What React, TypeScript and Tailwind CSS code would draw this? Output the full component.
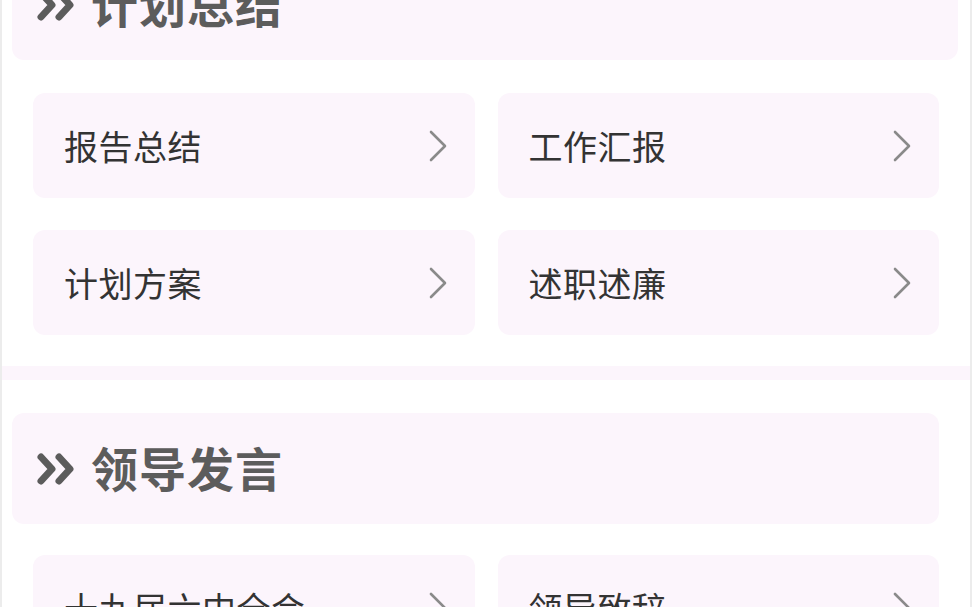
import React from "react";

const font = { fontFamily: '"Noto Sans CJK SC", "Noto Sans", sans-serif' };

function Chevron() {
  return (
    <svg width="20" height="32" viewBox="0 0 20 32" fill="none" className="shrink-0">
      <polyline points="3,2 17,16 3,30" stroke="#8a8a8a" strokeWidth="2.6" strokeLinecap="round" strokeLinejoin="round" />
    </svg>
  );
}

function DoubleChevron() {
  return (
    <svg width="40" height="34" viewBox="0 0 40 34" fill="none" className="shrink-0">
      <path d="M5 5 L16 17 L5 29" stroke="#5c5c5c" strokeWidth="7" strokeLinecap="round" strokeLinejoin="round" />
      <path d="M23 5 L34 17 L23 29" stroke="#5c5c5c" strokeWidth="7" strokeLinecap="round" strokeLinejoin="round" />
    </svg>
  );
}

function Header({ title, wide }: { title: string; wide?: boolean }) {
  return (
    <div
      className={
        "ml-[10px] h-[111px] rounded-[12px] bg-[#fcf5fc] flex items-center pl-[24px] gap-[15px] " +
        (wide ? "mr-[12px]" : "mr-[31px]")
      }
    >
      <DoubleChevron />
      <span className="text-[47px] font-bold leading-none text-[#5c5c5c] tracking-[1px] mt-[-4px]">{title}</span>
    </div>
  );
}

function Item({ label }: { label: string }) {
  return (
    <div className="h-[105px] rounded-[12px] bg-[#fcf5fc] flex items-center justify-between pl-[31px] pr-[27px]">
      <span className="text-[34px] leading-none text-[#333333] tracking-[0.5px]">{label}</span>
      <Chevron />
    </div>
  );
}

export default function App() {
  return (
    <div style={font} className="w-[972px] h-[607px] overflow-hidden bg-white">
      <div className="h-full flex flex-col border-l-2 border-r-2 border-[#ececec] bg-white">
        <div className="mt-[-51px]">
          <Header title="计划总结" wide />
          <div className="mt-[33px] px-[31px] grid grid-cols-2 gap-x-[23px] gap-y-[32px]">
            <Item label="报告总结" />
            <Item label="工作汇报" />
            <Item label="计划方案" />
            <Item label="述职述廉" />
          </div>
          <div className="mt-[31px] h-[14px] bg-[#fcf5fc]" />
          <div className="mt-[33px]">
            <Header title="领导发言" />
          </div>
          <div className="mt-[31px] px-[31px] grid grid-cols-2 gap-x-[23px] gap-y-[32px]">
            <Item label="十九届六中全会" />
            <Item label="领导致辞" />
          </div>
        </div>
      </div>
    </div>
  );
}
